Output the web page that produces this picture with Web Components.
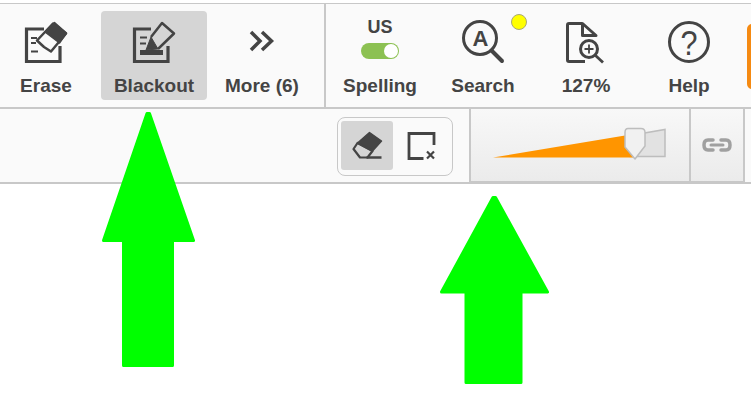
<!DOCTYPE html>
<html>
<head>
<meta charset="utf-8">
<style>
html, body { margin: 0; padding: 0; background: #fff; }
body { width: 751px; height: 410px; overflow: hidden; position: relative; font-family: "Liberation Sans", Arial, sans-serif; }
svg { display: block; }
</style>
</head>
<body>
<pdf-app>
	<tool-bar>
		<tool-button label="Erase" style="--w:92px;margin-right:9px">
			<svg width="48" height="46" viewBox="22 20 48 46" fill="none" stroke="#444" stroke-width="3.200">
				<path d="M44 29H26.500V61.500H60V46"/>
				<path d="M37 40.500L53 23.500L66 33.500L51 51.500L44 47Z" fill="#fafafa" stroke-linejoin="round" stroke-width="2.500"/>
				<path d="M45 32L54.500 22.500L66.500 33L59.500 43Z" fill="#444" stroke="#444" stroke-width="1.500" stroke-linejoin="round"/>
				<path d="M31 38H37M31 43H36M31 51.500H38" stroke-width="2"/>
			</svg>
		</tool-button>
		<tool-button label="Blackout" active style="--w:106px">
			<svg width="48" height="46" viewBox="130 20 48 46" fill="none" stroke="#444" stroke-width="3.200">
				<path d="M151 29H134.500V61.500H168V46"/>
				<path d="M151 37L162 23L174 33.500L158 49" stroke-width="2.500" stroke-linejoin="round"/>
				<path d="M151 37L158 49L146 50Z" fill="#444" stroke-width="1"/>
				<path d="M140 52.500H163" stroke-width="5"/>
				<path d="M140 37.500H147M140 43.500H146" stroke-width="2"/>
			</svg>
		</tool-button>
		<tool-button label="More (6)" style="--w:110px">
			<svg width="48" height="46" viewBox="238 20 48 46" fill="none" stroke="#444" stroke-width="3.500">
				<path d="M251 32L260 41L251 50M262 32L271.500 41L262 50"/>
			</svg>
		</tool-button>
		<tool-sep></tool-sep>
		<tool-button label="Spelling">
			<spell-toggle lang-code="US"></spell-toggle>
		</tool-button>
		<tool-button label="Search">
			<svg width="48" height="46" viewBox="459 20 48 46" fill="none" stroke="#444">
				<circle cx="480" cy="38" r="16.500" stroke-width="3"/>
				<path d="M491.500 50.500L502 61" stroke-width="4" stroke-linecap="round"/>
				<text x="480.500" y="45.500" text-anchor="middle" font-family="Liberation Sans" font-weight="700" font-size="22" fill="#444" stroke="none">A</text>
			</svg>
			<status-dot></status-dot>
		</tool-button>
		<tool-button label="127%">
			<svg width="48" height="46" viewBox="562 20 48 46" fill="none" stroke="#444" stroke-width="3">
				<path d="M582 23.500H569Q567.500 23.500 567.500 25V60Q567.500 61.500 569 61.500H585"/>
				<path d="M582.500 23.500V35.500H596L582.500 23.500Z" stroke-linejoin="round"/>
				<circle cx="589" cy="49" r="8.500"/>
				<path d="M589 44.500V53.500M584.500 49H593.500" stroke-width="1.800"/>
				<path d="M595.500 55.500L603 62.500" stroke-width="2.800"/>
			</svg>
		</tool-button>
		<tool-button label="Help">
			<svg width="48" height="46" viewBox="665 20 48 46" fill="none" stroke="#444" stroke-width="3">
				<circle cx="689" cy="42" r="19.500"/>
				<text transform="translate(689 55) scale(.85 1)" text-anchor="middle" font-family="Liberation Sans" font-weight="400" font-size="36" fill="#444" stroke="none">?</text>
			</svg>
		</tool-button>
		<side-tab></side-tab>
	</tool-bar>
	<option-bar>
		<mode-switch>
			<mode-option active>
				<svg width="36" height="36" viewBox="349.500 128 36 36" fill="none" stroke="#444">
					<path d="M370 132.500L382 141L373 151L358 143Z" fill="#444" stroke-width="1.500" stroke-linejoin="round"/>
					<path d="M358 143L354 149L360.500 157.500H368L373 151Z" stroke-width="2.200" stroke-linejoin="round"/>
					<path d="M367 157.500H382" stroke-width="2.500"/>
				</svg>
			</mode-option>
			<mode-option>
				<svg width="36" height="36" viewBox="401.500 128 36 36" fill="none" stroke="#444" stroke-width="2.800">
					<path d="M434.500 145V133.500H409.500V158.500H424"/>
					<path d="M427.500 151.500L434.500 158.500M434.500 151.500L427.500 158.500" stroke-width="2.200"/>
				</svg>
			</mode-option>
		</mode-switch>
		<opacity-slider></opacity-slider>
		<link-button></link-button>
	</option-bar>
	<arrow-overlay></arrow-overlay>
</pdf-app>

<script>
class PdfApp extends HTMLElement {
	constructor() {
		super();
		this.attachShadow({mode: 'open'}).innerHTML = `<style>
:host { display: block; padding-top: 3px; }
</style><slot></slot>`;
	}
}

class ToolBar extends HTMLElement {
	constructor() {
		super();
		this.attachShadow({mode: 'open'}).innerHTML = `<style>
:host {
	display: flex;
	align-items: flex-start;
	box-sizing: border-box;
	height: 106px;
	padding-top: 7px;
	background: #fafafa;
	border-top: 1px solid #c8c8c8;
	border-bottom: 2px solid #c8c8c8;
	position: relative;
	overflow: hidden;
}
</style><slot></slot>`;
	}
}

class ToolButton extends HTMLElement {
	constructor() {
		super();
		this.attachShadow({mode: 'open'}).innerHTML = `<style>
:host {
	display: flex;
	flex-direction: column;
	align-items: center;
	flex: none;
	box-sizing: border-box;
	width: var(--w, 103px);
	height: 89px;
	padding-top: 9px;
	border-radius: 4px;
	position: relative;
	font: 700 19px/22px "Liberation Sans", Arial, sans-serif;
	color: #444;
}
:host([active]) { background: #d5d5d5; }
.icon { height: 46px; display: flex; justify-content: center; }
.label { margin-top: 9px; white-space: nowrap; }
</style><div class="icon"><slot></slot></div><div class="label"></div>`;
	}

	connectedCallback() {
		this.shadowRoot.querySelector('.label').textContent = this.getAttribute('label');
	}
}

class ToolSep extends HTMLElement {
	constructor() {
		super();
		this.attachShadow({mode: 'open'}).innerHTML = `<style>
:host {
	display: block;
	flex: none;
	box-sizing: content-box;
	width: 2px;
	height: 104px;
	margin: -7px 3px 0 6.500px;
	background: #c8c8c8;
}
</style>`;
	}
}

class SpellToggle extends HTMLElement {
	constructor() {
		super();
		this.attachShadow({mode: 'open'}).innerHTML = `<style>
:host { display: flex; flex-direction: column; align-items: center; width: 48px; height: 46px; }
.code { font: 700 18px/18px "Liberation Sans", Arial, sans-serif; color: #444; margin-top: -2px; }
.track {
	box-sizing: border-box;
	display: flex;
	justify-content: flex-end;
	width: 38px;
	height: 16px;
	margin-top: 7px;
	border-radius: 8px;
	background: #8cc152;
}
.knob {
	box-sizing: border-box;
	width: 14px;
	height: 14px;
	margin: 1px;
	border-radius: 50%;
	background: #fff;
}
</style><div class="code"></div><div class="track"><div class="knob"></div></div>`;
	}

	connectedCallback() {
		this.shadowRoot.querySelector('.code').textContent = this.getAttribute('lang-code');
	}
}

class StatusDot extends HTMLElement {
	constructor() {
		super();
		this.attachShadow({mode: 'open'}).innerHTML = `<style>
:host {
	display: block;
	position: absolute;
	left: 79px;
	top: 3px;
	box-sizing: border-box;
	width: 16px;
	height: 16px;
	border-radius: 50%;
	background: #ffff00;
	border: 1px solid #a8a878;
}
</style>`;
	}
}

class SideTab extends HTMLElement {
	constructor() {
		super();
		this.attachShadow({mode: 'open'}).innerHTML = `<style>
:host {
	display: block;
	position: absolute;
	left: 747px;
	top: 20px;
	width: 12px;
	height: 65px;
	border-radius: 5px;
	background: #f58a12;
}
</style>`;
	}
}

class OptionBar extends HTMLElement {
	constructor() {
		super();
		this.attachShadow({mode: 'open'}).innerHTML = `<style>
:host {
	display: flex;
	align-items: flex-start;
	box-sizing: border-box;
	height: 75px;
	padding-left: 337px;
	background: #fafafa;
	border-bottom: 2px solid #c8c8c8;
}
</style><slot></slot>`;
	}
}

class ModeSwitch extends HTMLElement {
	constructor() {
		super();
		this.attachShadow({mode: 'open'}).innerHTML = `<style>
:host {
	display: flex;
	box-sizing: border-box;
	width: 116px;
	height: 59px;
	margin: 8px 16px 0 0;
	padding: 3px;
	border: 1.500px solid #c8c8c8;
	border-radius: 8px;
	background: #fafafa;
}
</style><slot></slot>`;
	}
}

class ModeOption extends HTMLElement {
	constructor() {
		super();
		this.attachShadow({mode: 'open'}).innerHTML = `<style>
:host {
	display: flex;
	align-items: center;
	justify-content: center;
	width: 52px;
	height: 49px;
	border-radius: 3px;
}
:host([active]) { background: #d5d5d5; }
</style><slot></slot>`;
	}
}

class OpacitySlider extends HTMLElement {
	constructor() {
		super();
		this.attachShadow({mode: 'open'}).innerHTML = `<style>
:host {
	display: block;
	box-sizing: border-box;
	width: 221px;
	margin-top: -2px;
	height: 76px;
	border: 2px solid #c8c8c8;
	border-right-width: 1px;
	background: linear-gradient(#f8f8f8, #ebebeb);
}
svg { display: block; }
</style><svg width="218" height="72" viewBox="471 109 218 72">
	<path d="M630 135.500L665 129.500V156.500H630Z" fill="#e2e2e2" stroke="#bdbdbd" stroke-width="1.500"/>
	<path d="M493 157.500L634 134V157.500Z" fill="#ff9500"/>
	<path d="M628 128.500H641Q645 128.500 645 132.500V146L635 159L625 147V132.500Q625 128.500 628 128.500Z" fill="#f1f1f1" stroke="#bdbdbd" stroke-width="1.500" stroke-linejoin="round"/>
</svg>`;
	}
}

class LinkButton extends HTMLElement {
	constructor() {
		super();
		this.attachShadow({mode: 'open'}).innerHTML = `<style>
:host {
	display: flex;
	align-items: center;
	justify-content: center;
	box-sizing: border-box;
	width: 55px;
	height: 76px;
	margin-top: -2px;
	border: 2px solid #c8c8c8;
	border-left-width: 1px;
	background: linear-gradient(#f8f8f8, #ebebeb);
}
</style><svg width="30" height="16" viewBox="0 0 30 16" fill="none" stroke="#a0a0a0" stroke-width="3.500" stroke-linecap="round">
	<path d="M11 3H6Q2 3 2 8T6 13H11M19 3H24Q28 3 28 8T24 13H19"/>
	<path d="M9 8H21" stroke-width="3"/>
</svg>`;
	}
}

// The arrows are drawn over the whole page, they are annotations on the screenshot
class ArrowOverlay extends HTMLElement {
	constructor() {
		super();
		this.attachShadow({mode: 'open'}).innerHTML = `<style>
:host { display: block; position: absolute; left: 0; top: 0; pointer-events: none; }
svg { display: block; }
</style><svg width="751" height="410" viewBox="0 0 751 410" fill="#00ff00" stroke="#00ff00" stroke-width="3" stroke-linejoin="round">
	<path d="M147 113.500H149.500L193.500 240.500H172.500V365.500H123.500V240.500H103.500Z"/>
	<path d="M493 197.500H495.500L547.500 292H521V382.500H466V292H441.500Z"/>
</svg>`;
	}
}

customElements.define('pdf-app', PdfApp);
customElements.define('tool-bar', ToolBar);
customElements.define('tool-button', ToolButton);
customElements.define('tool-sep', ToolSep);
customElements.define('spell-toggle', SpellToggle);
customElements.define('status-dot', StatusDot);
customElements.define('side-tab', SideTab);
customElements.define('option-bar', OptionBar);
customElements.define('mode-switch', ModeSwitch);
customElements.define('mode-option', ModeOption);
customElements.define('opacity-slider', OpacitySlider);
customElements.define('link-button', LinkButton);
customElements.define('arrow-overlay', ArrowOverlay);
</script>
</body>
</html>
